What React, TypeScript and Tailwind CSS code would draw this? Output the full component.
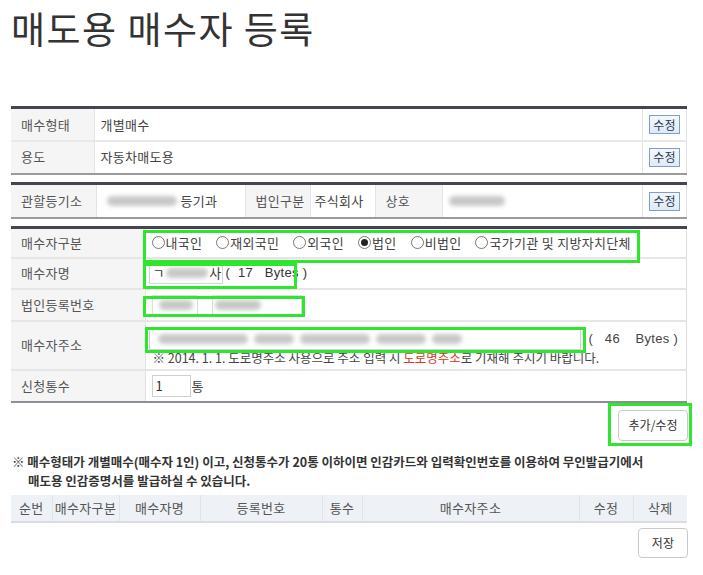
import React from 'react';

const FONT = { fontFamily: '"Noto Sans CJK KR", "Noto Sans", sans-serif' };

function EditBtn() {
  return (
    <button className="h-[19px] w-[31px] border border-[#7f9fc9] bg-gradient-to-b from-[#f4f8fd] to-[#dfe9f6] text-[12px] leading-none text-[#2b3a55]">
      수정
    </button>
  );
}

function Blur({ w, className = '' }: { w: number; className?: string }) {
  return <span className={`inline-block h-[10px] rounded-full bg-[#c8c8c8] blur-[2px] ${className}`} style={{ width: w }} />;
}

function Radio({ label, checked = false }: { label: string; checked?: boolean }) {
  return (
    <label className="flex items-center gap-[1px]">
      <span className="flex h-[13px] w-[13px] items-center justify-center rounded-full border border-[#777] bg-white">
        {checked && <span className="h-[7px] w-[7px] rounded-full bg-[#222]" />}
      </span>
      <span>{label}</span>
    </label>
  );
}

export default function App() {
  const th = 'bg-[#f5f5f5] text-left font-normal text-[#555] pl-[10px]';
  const green = 'pointer-events-none absolute border-[3px] border-[#2de62d]';
  return (
    <div className="relative min-h-[575px] w-[703px] bg-white text-[13px] tracking-[0.3px] text-[#444]" style={FONT}>
      <h1 className="pl-[11px] pt-[4px] text-[37px] font-normal leading-[48px] tracking-[1.5px] text-[#333]">매도용 매수자 등록</h1>

      <div className="mx-[11px] mt-[54px] w-[676px]">
        {/* 매수형태 / 용도 */}
        <table className="w-full border-collapse border-t-[3px] border-b-2 border-t-[#45454f] border-b-[#9a9a9f]">
          <tbody>
            <tr className="h-[33px] border-b-2 border-[#e8e8e8]">
              <th className={`${th} w-[83px] border-r border-[#e3e3e3]`}>매수형태</th>
              <td className="pl-[6px]">개별매수</td>
              <td className="w-[44px] border-l border-r border-[#e3e3e3] text-center"><EditBtn /></td>
            </tr>
            <tr className="h-[33px]">
              <th className={`${th} border-r border-[#e3e3e3]`}>용도</th>
              <td className="pl-[6px]">자동차매도용</td>
              <td className="border-l border-r border-[#e3e3e3] text-center"><EditBtn /></td>
            </tr>
          </tbody>
        </table>

        {/* 관할등기소 */}
        <table className="mt-[7px] w-full border-collapse border-t-[3px] border-b-2 border-t-[#45454f] border-b-[#9a9a9f]">
          <tbody>
            <tr className="h-[35px]">
              <th className={`${th} w-[85px] border-r border-[#e3e3e3]`}>관할등기소</th>
              <td className="w-[149px] border-r border-[#e3e3e3] pl-[10px]">
                <span className="flex items-center gap-[4px]"><Blur w={70} />등기과</span>
              </td>
              <th className={`${th} w-[65px] border-r border-[#e3e3e3]`}>법인구분</th>
              <td className="w-[65px] border-r border-[#e3e3e3] pl-[4px]">주식회사</td>
              <th className={`${th} w-[67px] border-r border-[#e3e3e3]`}>상호</th>
              <td className="pl-[6px]"><Blur w={56} /></td>
              <td className="w-[44px] border-l border-r border-[#e3e3e3] text-center"><EditBtn /></td>
            </tr>
          </tbody>
        </table>

        {/* 매수자 정보 */}
        <table className="mt-[7px] w-full border-collapse border-t-[3px] border-b-2 border-t-[#45454f] border-b-[#8e8e96] border-r border-r-[#dedede]">
          <tbody>
            <tr className="h-[30px] border-b-2 border-[#e6e6e6]">
              <th className={`${th} w-[134px] border-r border-[#e3e3e3]`}>매수자구분</th>
              <td className="pl-[6px]">
                <div className="flex items-center gap-[14px] text-[#444]">
                  <Radio label="내국인" />
                  <Radio label="재외국민" />
                  <Radio label="외국인" />
                  <Radio label="법인" checked />
                  <Radio label="비법인" />
                  <Radio label="국가기관 및 지방자치단체" />
                </div>
              </td>
            </tr>
            <tr className="h-[31px] border-b-2 border-[#e6e6e6]">
              <th className={`${th} border-r border-[#e3e3e3]`}>매수자명</th>
              <td className="pl-[3px]">
                <div className="flex items-center">
                  <span className="flex h-[22px] w-[74px] items-center border border-[#d4d4d4] pl-[3px] text-[#333]">
                    ㄱ<Blur w={46} className="mx-[1px]" />사
                  </span>
                  <span className="ml-[3px] whitespace-pre text-[#333]" style={{ fontFamily: '"Liberation Sans", sans-serif' }}>(  17   Bytes )</span>
                </div>
              </td>
            </tr>
            <tr className="h-[32px] border-b-2 border-[#e6e6e6]">
              <th className={`${th} border-r border-[#e3e3e3]`}>법인등록번호</th>
              <td className="pl-[6px]">
                <div className="flex items-center gap-[14px]">
                  <span className="flex h-[20px] w-[46px] items-center border border-[#dcdcdc] pl-[6px]"><Blur w={34} /></span>
                  <span className="flex h-[20px] w-[90px] items-center border border-[#dcdcdc] pl-[2px]"><Blur w={46} /></span>
                </div>
              </td>
            </tr>
            <tr className="h-[49px] border-b-2 border-[#e6e6e6]">
              <th className={`${th} border-r border-[#e3e3e3]`}>매수자주소</th>
              <td className="pl-[3px] pt-[7px] pb-[3px] align-top">
                <div className="flex items-center">
                  <span className="flex h-[21px] w-[432px] items-center gap-[6px] border border-[#cfcfcf] pl-[8px]">
                    <Blur w={90} /><Blur w={40} /><Blur w={70} /><Blur w={50} /><Blur w={30} />
                  </span>
                  <span className="ml-[8px] whitespace-pre text-[#444]" style={{ fontFamily: '"Liberation Sans", sans-serif' }}>(   46    Bytes )</span>
                </div>
                <div className="pl-[4px] text-[12.5px] leading-[16px] tracking-[0px] text-[#444]">
                  ※ 2014. 1. 1. 도로명주소 사용으로 주소 입력 시 <span className="text-[#d23a2a]">도로명주소</span>로 기재해 주시기 바랍니다.
                </div>
              </td>
            </tr>
            <tr className="h-[32px]">
              <th className={`${th} border-r border-[#e3e3e3]`}>신청통수</th>
              <td className="pl-[6px]">
                <div className="flex items-center">
                  <span className="flex h-[22px] w-[39px] items-center border border-[#cfcfcf] pl-[3px] text-[#333]">1</span>
                  <span className="ml-[1px]">통</span>
                </div>
              </td>
            </tr>
          </tbody>
        </table>

        <div className="mt-[7px] flex justify-end">
          <button className="mr-[-1px] h-[31px] w-[70px] rounded-[4px] border border-[#c9c9c9] bg-white text-[12px] tracking-normal text-[#333]">추가/수정</button>
        </div>

        <div className="mt-[11px] pl-[1px] text-[12.5px] font-bold leading-[19px] tracking-normal text-[#333]">
          <p>※ 매수형태가 개별매수(매수자 1인) 이고, 신청통수가 20통 이하이면 인감카드와 입력확인번호를 이용하여 무인발급기에서</p>
          <p className="pl-[16px]">매도용 인감증명서를 발급하실 수 있습니다.</p>
        </div>

        <table className="mt-[5px] w-full border-collapse border-b-2 border-[#d8dde4] bg-[#eef1f6] text-[13px] text-[#555]">
          <thead>
            <tr className="h-[27px]">
              <th className="w-[41px] border-r border-[#dfe3ea] font-normal">순번</th>
              <th className="w-[67px] border-r border-[#dfe3ea] font-normal">매수자구분</th>
              <th className="w-[81px] border-r border-[#dfe3ea] font-normal">매수자명</th>
              <th className="w-[122px] border-r border-[#dfe3ea] font-normal">등록번호</th>
              <th className="w-[40px] border-r border-[#dfe3ea] font-normal">통수</th>
              <th className="border-r border-[#dfe3ea] font-normal">매수자주소</th>
              <th className="w-[54px] border-r border-[#dfe3ea] font-normal">수정</th>
              <th className="w-[54px] font-normal">삭제</th>
            </tr>
          </thead>
        </table>

        <div className="mt-[5px] flex justify-end">
          <button className="mr-[-1px] h-[30px] w-[50px] rounded-[4px] border border-[#c9c9c9] bg-white text-[12px] text-[#333]">저장</button>
        </div>
      </div>

      {/* annotation boxes */}
      <div className={`${green} left-[143px] top-[230px] h-[33px] w-[497px]`} />
      <div className={`${green} left-[143px] top-[263px] h-[26px] w-[154px]`} />
      <div className={`${green} left-[143px] top-[296px] h-[21px] w-[162px]`} />
      <div className={`${green} left-[145px] top-[327px] h-[26px] w-[441px]`} />
      <div className={`${green} left-[608px] top-[403px] h-[43px] w-[84px]`} />
    </div>
  );
}
